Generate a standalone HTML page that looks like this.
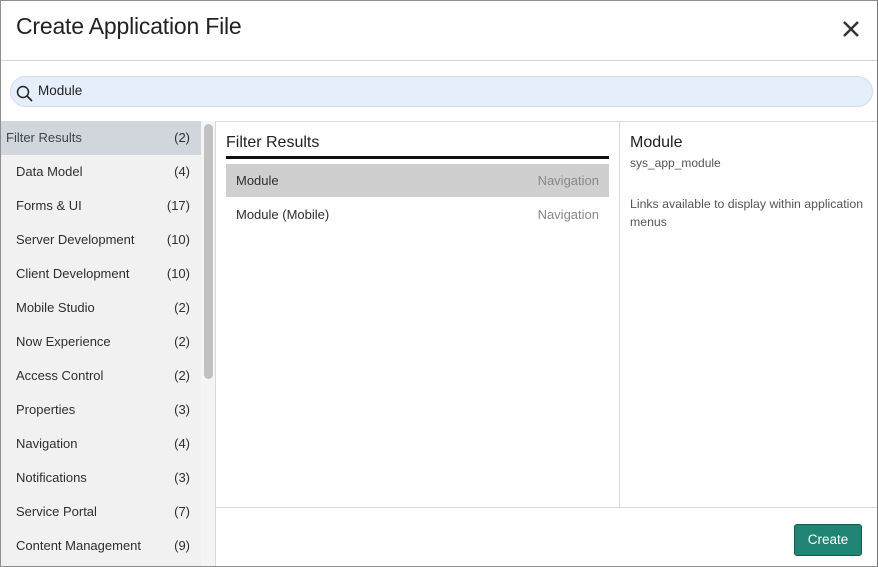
<!DOCTYPE html>
<html><head><style>
*{box-sizing:border-box;margin:0;padding:0}
body{width:878px;height:567px;overflow:hidden;font-family:"Liberation Sans",sans-serif;color:#2e2e2e;background:#fff}
.frame{position:absolute;left:0;top:0;width:878px;height:567px;border:1px solid #8e8e8e;border-right-color:#777}
.title{position:absolute;left:16px;top:13px;font-size:23px;letter-spacing:-0.2px;color:#222}
.hdrline{position:absolute;left:1px;right:1px;top:60px;height:1px;background:#d4d4d4}
.search{position:absolute;left:10px;top:76px;width:863px;height:31px;border-radius:16px;background:#e5eefb;border:1px solid #d4dcea}
.search span{position:absolute;left:27px;top:6px;font-size:13.5px;color:#222}
.left{position:absolute;left:1px;top:121px;width:200px;height:445px;background:#f1f1f1}
.row{position:absolute;left:0;width:200px;height:34px;font-size:13px;line-height:34px;color:#2e2e2e}
.row .n{position:absolute;left:15px}
.row .c{position:absolute;right:11px}
.row.sel{background:#d1d6dc}
.row.sel .n{left:5px;color:#3b4550}
.sb{position:absolute;left:204px;top:124px;width:9px;height:255px;background:#c2c2c2;border-radius:5px}
.sbtrack{position:absolute;left:201px;top:121px;width:14px;height:445px;background:#f5f5f5}
.main{position:absolute;left:215px;top:121px;width:662px;height:445px;border-top:1px solid #d9d9d9;border-left:1px solid #d9d9d9}
.mid{position:absolute;left:216px;top:122px;width:404px;height:386px;border-right:1px solid #d9d9d9}
.foot{position:absolute;left:216px;top:507px;width:661px;height:1px;background:#d9d9d9}
.fr{position:absolute;left:226px;top:134px;font-size:16px;color:#222}
.ul{position:absolute;left:226px;top:156px;width:383px;height:3px;background:#111}
.item{position:absolute;left:226px;width:383px;height:33px;font-size:13px;line-height:33px}
.item .n{position:absolute;left:10px}
.item .t{position:absolute;right:10px;color:#888}
.btn{position:absolute;left:794px;top:524px;width:68px;height:32px;background:#1f8473;border:1px solid #135c50;border-radius:3px;color:#fff;font-size:13.5px;text-align:center;line-height:30px}
</style></head><body>
<div class="frame"></div>
<div class="title">Create Application File</div>
<svg style="position:absolute;left:842px;top:20px" width="18" height="18"><path d="M2 2L16 16M16 2L2 16" stroke="#333" stroke-width="2.4"/></svg>
<div class="hdrline"></div>
<div class="search"><svg style="position:absolute;left:5px;top:8px" width="18" height="18"><circle cx="7" cy="7" r="5.5" fill="none" stroke="#222" stroke-width="1.5"/><path d="M11 11L16 16" stroke="#222" stroke-width="1.6"/></svg><span>Module</span></div>
<div class="left">
<div class="row sel" style="top:0"><span class="n">Filter Results</span><span class="c">(2)</span></div>
<div class="row" style="top:34px"><span class="n">Data Model</span><span class="c">(4)</span></div>
<div class="row" style="top:68px"><span class="n">Forms &amp; UI</span><span class="c">(17)</span></div>
<div class="row" style="top:102px"><span class="n">Server Development</span><span class="c">(10)</span></div>
<div class="row" style="top:136px"><span class="n">Client Development</span><span class="c">(10)</span></div>
<div class="row" style="top:170px"><span class="n">Mobile Studio</span><span class="c">(2)</span></div>
<div class="row" style="top:204px"><span class="n">Now Experience</span><span class="c">(2)</span></div>
<div class="row" style="top:238px"><span class="n">Access Control</span><span class="c">(2)</span></div>
<div class="row" style="top:272px"><span class="n">Properties</span><span class="c">(3)</span></div>
<div class="row" style="top:306px"><span class="n">Navigation</span><span class="c">(4)</span></div>
<div class="row" style="top:340px"><span class="n">Notifications</span><span class="c">(3)</span></div>
<div class="row" style="top:374px"><span class="n">Service Portal</span><span class="c">(7)</span></div>
<div class="row" style="top:408px"><span class="n">Content Management</span><span class="c">(9)</span></div>
</div>
<div class="sbtrack"></div><div class="sb"></div>
<div class="main"></div>
<div class="mid"></div>
<div class="foot"></div>
<div class="fr">Filter Results</div>
<div class="ul"></div>
<div class="item" style="top:164px;background:#cfcfcf"><span class="n">Module</span><span class="t">Navigation</span></div>
<div class="item" style="top:198px"><span class="n">Module (Mobile)</span><span class="t">Navigation</span></div>
<div style="position:absolute;left:630px;top:134px;font-size:16px;color:#222">Module</div>
<div style="position:absolute;left:630px;top:156px;font-size:12px;color:#555">sys_app_module</div>
<div style="position:absolute;left:630px;top:195px;width:246px;font-size:12.3px;line-height:18px;color:#555">Links available to display within application menus</div>
<div class="btn">Create</div>
</body></html>
